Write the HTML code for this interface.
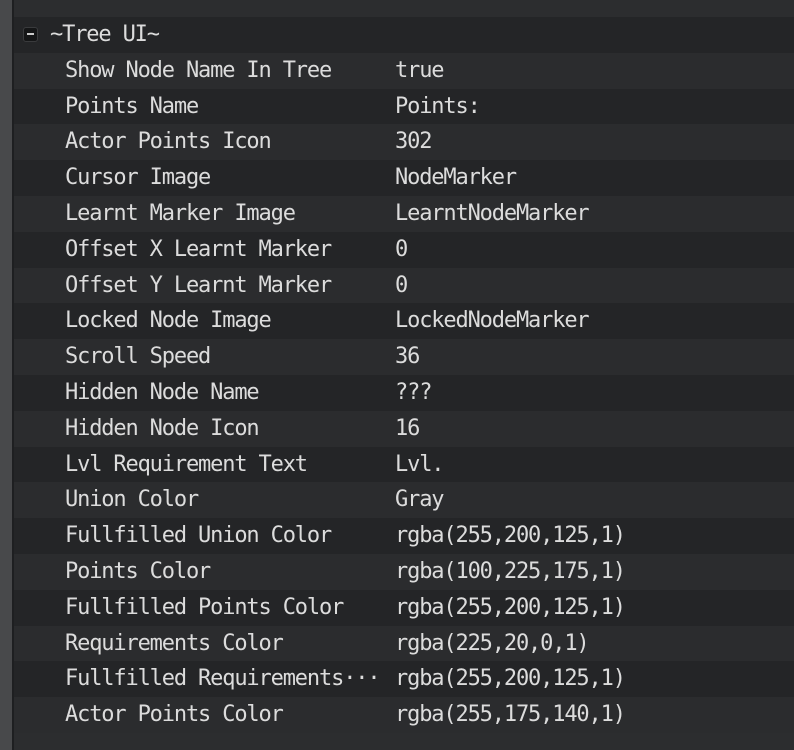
<!DOCTYPE html>
<html><head><style>
body{margin:0;width:794px;height:750px;background:#2c2d2f;overflow:hidden;font-family:"DejaVu Sans Mono","Liberation Mono",monospace;font-size:22px;letter-spacing:-1.15px;color:#dcdcdc;position:relative}
.strip{position:absolute;left:0;top:0;width:12px;height:750px;background:#48494b;border-right:2px solid #1e1f21}
.rows{position:absolute;left:14px;top:17px;right:0}
.r{height:35.8px;line-height:36px;position:relative;white-space:nowrap}
.r:nth-child(odd){background:#242527}
.r:nth-child(even){background:#2b2c2e}
.k{position:absolute;left:51px}
.v{position:absolute;left:381px}
.box{position:absolute;left:9px;top:10px;width:13px;height:13px;background:#151617;border:1px solid #3a3b3d;border-radius:3px}
.box:after{content:"";position:absolute;left:3px;top:5px;width:7px;height:2px;background:#ccc}
</style></head><body>
<div class="strip"></div>
<div class="rows">
<div class="r"><span class="box"></span><span style="position:absolute;left:36px">~Tree UI~</span></div>
<div class="r"><span class="k">Show Node Name In Tree</span><span class="v">true</span></div>
<div class="r"><span class="k">Points Name</span><span class="v">Points:</span></div>
<div class="r"><span class="k">Actor Points Icon</span><span class="v">302</span></div>
<div class="r"><span class="k">Cursor Image</span><span class="v">NodeMarker</span></div>
<div class="r"><span class="k">Learnt Marker Image</span><span class="v">LearntNodeMarker</span></div>
<div class="r"><span class="k">Offset X Learnt Marker</span><span class="v">0</span></div>
<div class="r"><span class="k">Offset Y Learnt Marker</span><span class="v">0</span></div>
<div class="r"><span class="k">Locked Node Image</span><span class="v">LockedNodeMarker</span></div>
<div class="r"><span class="k">Scroll Speed</span><span class="v">36</span></div>
<div class="r"><span class="k">Hidden Node Name</span><span class="v">???</span></div>
<div class="r"><span class="k">Hidden Node Icon</span><span class="v">16</span></div>
<div class="r"><span class="k">Lvl Requirement Text</span><span class="v">Lvl.</span></div>
<div class="r"><span class="k">Union Color</span><span class="v">Gray</span></div>
<div class="r"><span class="k">Fullfilled Union Color</span><span class="v">rgba(255,200,125,1)</span></div>
<div class="r"><span class="k">Points Color</span><span class="v">rgba(100,225,175,1)</span></div>
<div class="r"><span class="k">Fullfilled Points Color</span><span class="v">rgba(255,200,125,1)</span></div>
<div class="r"><span class="k">Requirements Color</span><span class="v">rgba(225,20,0,1)</span></div>
<div class="r"><span class="k">Fullfilled Requirements···</span><span class="v">rgba(255,200,125,1)</span></div>
<div class="r"><span class="k">Actor Points Color</span><span class="v">rgba(255,175,140,1)</span></div>
</div>
</body></html>
